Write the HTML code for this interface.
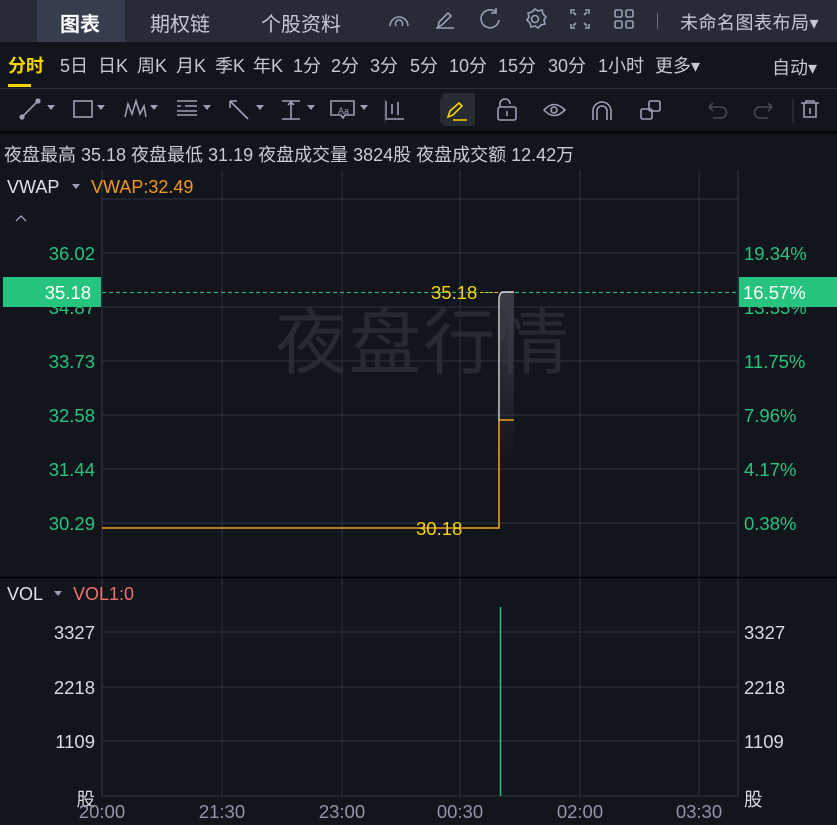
<!DOCTYPE html>
<html><head><meta charset="utf-8"><style>
*{margin:0;padding:0;box-sizing:border-box}
body{width:837px;height:825px;background:#12151c;font-family:"Liberation Sans","Noto Sans CJK SC",sans-serif;overflow:hidden;position:relative;color:#c9ccd4}
.abs{position:absolute;white-space:nowrap}
#top{position:absolute;left:0;top:0;width:837px;height:42px;background:#262b36}
#tf{position:absolute;left:0;top:42px;width:837px;height:46px;background:#12151c}
#tb{position:absolute;left:0;top:88px;width:837px;height:43px;background:#12151c;border-top:1px solid #2c3038}
#gap{position:absolute;left:0;top:131px;width:837px;height:3px;background:#05070a}
.t{position:absolute;top:52px;font-size:18px;color:#c3c8d3;white-space:nowrap}
svg{position:absolute;left:0;top:0}
</style></head><body>
<div id="top"></div>
<div class="abs" style="left:37px;top:0;width:88px;height:42px;background:#363e4d"></div>
<div class="abs" style="left:60px;top:8px;font-size:20px;color:#fff;font-weight:bold">图表</div>
<div class="abs" style="left:150px;top:8px;font-size:20px;color:#c3c8d3">期权链</div>
<div class="abs" style="left:261px;top:8px;font-size:20px;color:#c3c8d3">个股资料</div>
<div class="abs" style="left:680px;top:9px;font-size:18px;color:#c3c8d3;letter-spacing:0.5px">未命名图表布局▾</div>
<div class="abs" style="left:657px;top:13px;width:1px;height:16px;background:#6a7080"></div>
<div id="tf"></div>
<div class="t" style="left:8px;color:#f5d400;font-weight:bold">分时</div>
<div class="abs" style="left:8px;top:84px;width:23px;height:3px;background:#f5d400"></div>
<div class="t" style="left:60px">5日</div>
<div class="t" style="left:98px">日K</div>
<div class="t" style="left:137px">周K</div>
<div class="t" style="left:176px">月K</div>
<div class="t" style="left:215px">季K</div>
<div class="t" style="left:253px">年K</div>
<div class="t" style="left:293px">1分</div>
<div class="t" style="left:331px">2分</div>
<div class="t" style="left:370px">3分</div>
<div class="t" style="left:410px">5分</div>
<div class="t" style="left:449px">10分</div>
<div class="t" style="left:498px">15分</div>
<div class="t" style="left:548px">30分</div>
<div class="t" style="left:598px">1小时</div>
<div class="t" style="left:655px">更多▾</div>
<div class="t" style="left:772px;top:54px">自动▾</div>
<div id="tb"></div>
<div id="gap"></div>
<div class="abs" style="left:442px;top:93px;width:33px;height:33px;background:#272b33;border-radius:2px"></div>
<div class="abs" style="left:4px;top:141px;font-size:18px;color:#c9ccd4">夜盘最高 35.18 夜盘最低 31.19 夜盘成交量 3824股 夜盘成交额 12.42万</div>

<svg width="837" height="825" viewBox="0 0 837 825" fill="none">
<g stroke="#9aa0b5" stroke-width="1.6" fill="none">
<path d="M390 26a9 9 0 1 1 18 0M396 26a3.5 4 0 1 1 6 0"/>
<path d="M436 28h18M438 27l1-5 9-9 3 3-9 9z"/>
<path d="M496 12a9 9 0 1 0 3 8M496 8v5h-5"/>
<circle cx="535" cy="19" r="3.5"/><path d="M535 9l3 2 4-1 1 4 3 3-2 3 1 4-4 1-3 3-3-2-4 1-1-4-3-3 2-3-1-4 4-1z"/>
<path d="M571 14v-4h4M589 14v-4h-4M571 24v4h4M589 24v4h-4M573 12l3 3M587 12l-3 3M573 26l3-3M587 26l-3-3"/>
<rect x="615" y="10" width="7" height="7" rx="1.5"/><rect x="626" y="10" width="7" height="7" rx="1.5"/><rect x="615" y="21" width="7" height="7" rx="1.5"/><rect x="626" y="21" width="7" height="7" rx="1.5"/>
<path d="M22 117l16-16"/><circle cx="22" cy="117" r="1.8" fill="#9aa0b5"/><circle cx="38" cy="101" r="1.8" fill="#9aa0b5"/>
<rect x="74" y="101" width="18" height="16"/>
<path d="M125 117l3-13 4 10 4-13 4 13 4-8 2 11"/>
<path d="M177 101h20M177 106h4M185 106h12M177 111h20M177 115h20"/>
<path d="M230 101l18 18M230 101v7M230 101h7"/>
<path d="M282 101h18M282 119h18M291 101v18M288 105l3-3 3 3"/>
<path d="M331 101h23v14h-9l-2 3-2-3h-10z"/>
<path d="M386 101v18h18M392 104v10M398 102v13"/>
<path d="M453 120h14M448 117l2-6 9-8 3 3-9 9z" stroke="#f5d400"/>
<rect x="498" y="107" width="18" height="13" rx="2"/><path d="M500 107v-3a5 5 0 0 1 10 0M507 111v5"/>
<path d="M544 110q10-11 21 0q-11 11-21 0z"/><circle cx="554" cy="110" r="3"/>
<path d="M593 120v-9a9 9 0 0 1 18 0v9M597 120v-9a5 5 0 0 1 10 0v9"/>
<rect x="641" y="109" width="11" height="10" rx="1.5"/><rect x="649" y="101" width="11" height="10" rx="1.5"/>
<path d="M709 107h12a5 5 0 0 1 0 11h-8M709 107l4-4M709 107l4 4" stroke="#444a56"/>
<path d="M772 107h-12a5 5 0 0 0 0 11h8M772 107l-4-4M772 107l-4 4" stroke="#444a56"/>
<path d="M801 103h18M806 103v-2h8v2M804 103v14h12v-14M810 108v6"/>
</g>
<g fill="#9aa0b5"><path d="M47 105h8l-4 5zM97 105h8l-4 5zM150 105h8l-4 5zM203 105h8l-4 5zM256 105h8l-4 5zM307 105h8l-4 5zM360 105h8l-4 5z"/></g>
<path d="M441 99v24M793 99v24" stroke="#3a3f4a"/>
<path d="M385 99v24" stroke="#3a3f4a"/>
<text x="338" y="114" font-size="9" fill="#9aa0b5" font-family="Liberation Sans">Aa</text>

<g stroke="#2e3440" stroke-width="1">
<path d="M102 199H738M102 253H738M102 307H738M102 361H738M102 415H738M102 469H738M102 523H738"/>
<path d="M102 632H738M102 687H738M102 741H738M102 796H738"/>
<path d="M222 170V796M342 170V796M460 170V796M580 170V796M699 170V796"/>
<path d="M102 170V796M738 170V796" stroke="#353b48"/>
</g>
<path d="M0 577.5H837" stroke="#04060a" stroke-width="2"/>
<text x="275" y="368" font-size="72" fill="#262a32" font-family="Noto Sans CJK SC,sans-serif" letter-spacing="2">夜盘行情</text>
<defs><linearGradient id="g" x1="0" y1="0" x2="0" y2="1"><stop offset="0" stop-color="#3a3d44"/><stop offset="1" stop-color="#3a3d44" stop-opacity="0"/></linearGradient></defs>
<rect x="500" y="292" width="14" height="170" fill="url(#g)"/>
<path d="M102 292.5H738" stroke="#26c47e" stroke-dasharray="4 3"/>
<path d="M102 528H499V420H514" stroke="#f09a1e" stroke-width="1.6"/>
<path d="M499 420V298q1-6 4-6H514" stroke="#d8d8d8" stroke-width="1.4"/>
<path d="M465 528H499" stroke="#f0c020" stroke-dasharray="3 2"/>
<path d="M480 292.5H499" stroke="#f0c020" stroke-dasharray="3 2"/>
<text x="416" y="535" font-size="18.5" fill="#f5d400" font-family="Liberation Sans">30.18</text>
<text x="431" y="299" font-size="18.5" fill="#f5d400" font-family="Liberation Sans">35.18</text>
<path d="M500.5 607V796" stroke="#26c47e" stroke-width="1.5"/>
<g font-size="18.5" fill="#26c47e" font-family="Liberation Sans" text-anchor="end">
<text x="95" y="260">36.02</text><text x="95" y="314">34.87</text><text x="95" y="368">33.73</text><text x="95" y="422">32.58</text><text x="95" y="476">31.44</text><text x="95" y="530">30.29</text>
</g>
<g font-size="18.5" fill="#26c47e" font-family="Liberation Sans">
<text x="744" y="260">19.34%</text><text x="744" y="314">13.55%</text><text x="744" y="368">11.75%</text><text x="744" y="422">7.96%</text><text x="744" y="476">4.17%</text><text x="744" y="530">0.38%</text>
</g>
<rect x="3" y="277" width="98" height="30" fill="#26c47e"/>
<text x="91" y="299" font-size="18.5" fill="#fff" font-family="Liberation Sans" text-anchor="end">35.18</text>
<rect x="739" y="277" width="98" height="30" fill="#26c47e"/>
<text x="743" y="299" font-size="18.5" fill="#fff" font-family="Liberation Sans">16.57%</text>
<text x="7" y="193" font-size="18" fill="#e0e2e8" font-family="Liberation Sans">VWAP</text>
<path d="M72 184h8l-4 5z" fill="#9aa0b5"/>
<text x="91" y="193" font-size="18" fill="#f09a1e" font-family="Liberation Sans">VWAP:32.49</text>
<path d="M16 221l5-5 5 5" stroke="#9aa0b5" stroke-width="1.4"/>
<text x="7" y="600" font-size="18" fill="#e0e2e8" font-family="Liberation Sans">VOL</text>
<path d="M54 591h8l-4 5z" fill="#9aa0b5"/>
<text x="73" y="600" font-size="18" fill="#f07070" font-family="Liberation Sans">VOL1:0</text>
<g font-size="18.5" fill="#d8dae0" font-family="Liberation Sans">
<text x="95" y="639" text-anchor="end">3327</text><text x="95" y="694" text-anchor="end">2218</text><text x="95" y="748" text-anchor="end">1109</text>
<text x="744" y="639">3327</text><text x="744" y="694">2218</text><text x="744" y="748">1109</text>
<text x="95" y="806" text-anchor="end" font-family="Noto Sans CJK SC,sans-serif">股</text><text x="744" y="806" font-family="Noto Sans CJK SC,sans-serif">股</text>
</g>
<g font-size="18.5" fill="#8f96aa" font-family="Liberation Sans" text-anchor="middle">
<text x="102" y="818">20:00</text><text x="222" y="818">21:30</text><text x="342" y="818">23:00</text><text x="460" y="818">00:30</text><text x="580" y="818">02:00</text><text x="699" y="818">03:30</text>
</g>
</svg>
</body></html>
